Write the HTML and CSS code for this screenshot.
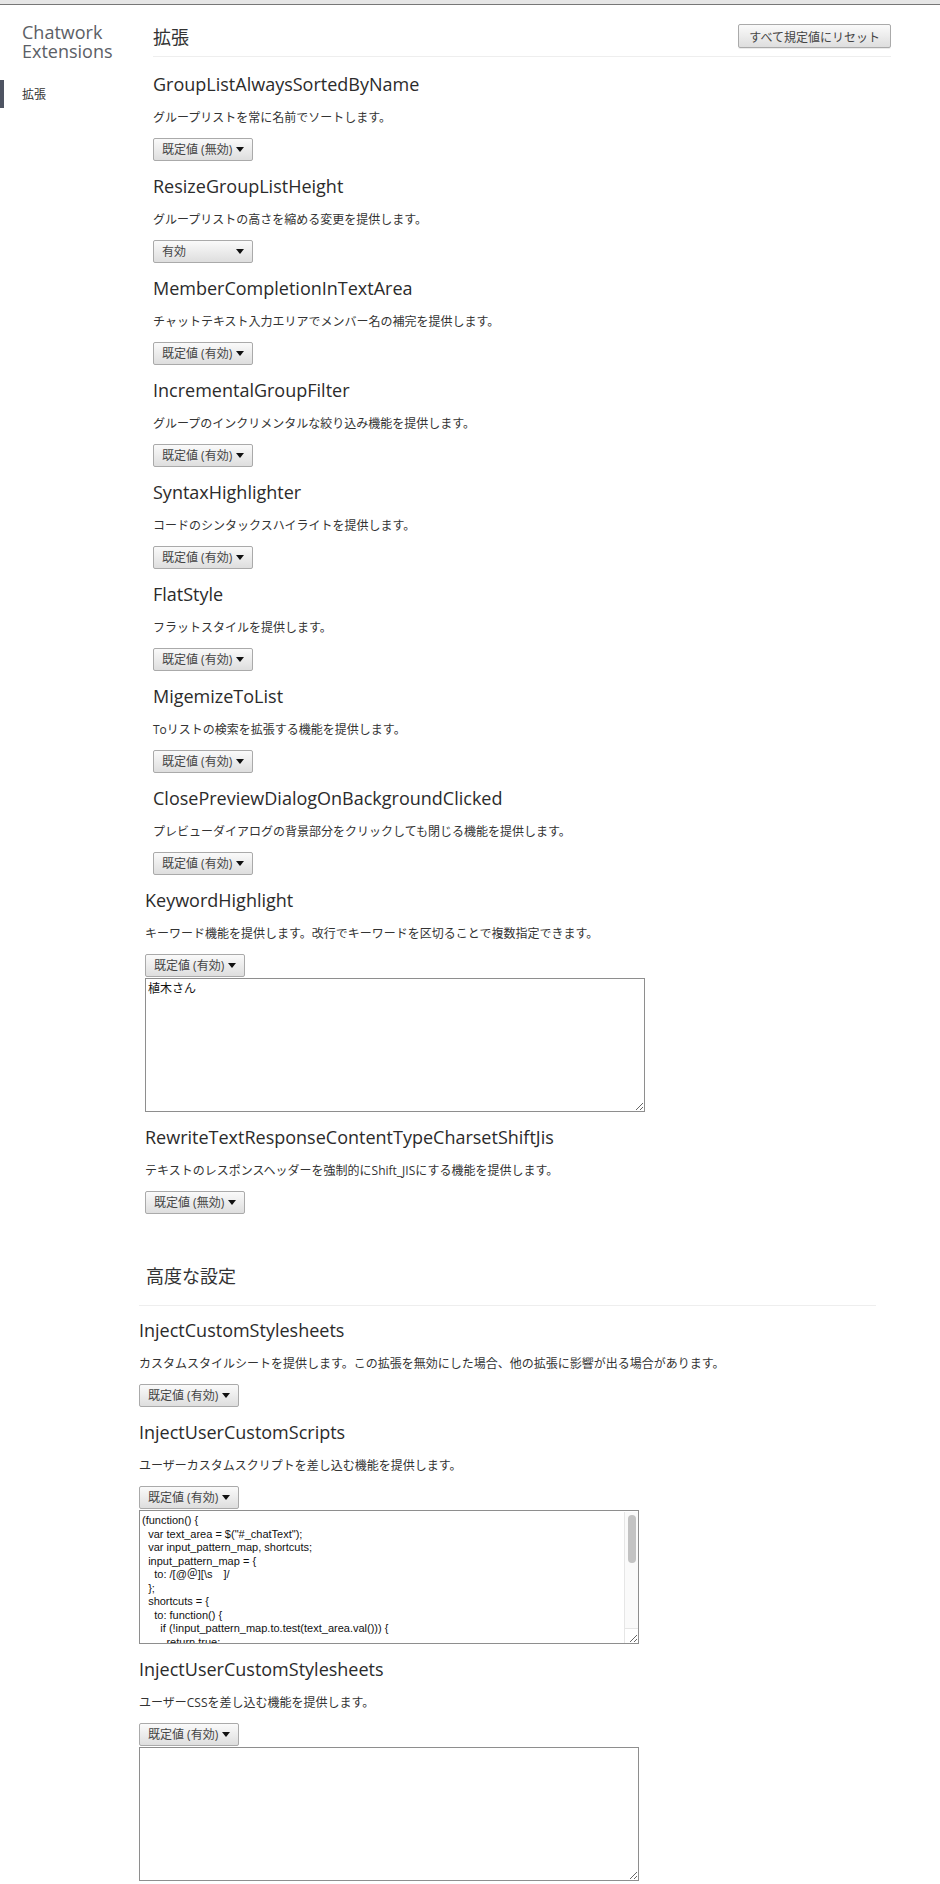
FILE: index.html
```html
<!DOCTYPE html>
<html>
    <head>
        <title>Chatwork Extensions - 設定</title>
        <meta charset="UTF-8">
        <meta name="viewport" content="width=device-width, initial-scale=1.0">
        <link rel="stylesheet" href="styles.css">
    </head>
    <body>
        <div class="topbar"></div>
        <div class="frame">
            <div class="sidebar">
                <div class="brand">
                    <div>Chatwork</div>
                    <div>Extensions</div>
                </div>
                <ul class="nav">
                    <li class="nav-item selected">拡張</li>
                </ul>
            </div>
            <div class="content">
                <div class="section">
                    <div class="section-head">
                        <h1>拡張</h1>
                        <button type="button" class="reset-btn">すべて規定値にリセット</button>
                    </div>
                    <div class="ext-list">
                        <div class="ext">
                            <h3>GroupListAlwaysSortedByName</h3>
                            <p>グループリストを常に名前でソートします。</p>
                            <div class="choice">
                                <select><option>既定値 (無効)</option><option>有効</option><option>無効</option></select>
                            </div>
                        </div>
                        <div class="ext">
                            <h3>ResizeGroupListHeight</h3>
                            <p>グループリストの高さを縮める変更を提供します。</p>
                            <div class="choice">
                                <select><option>有効</option><option>既定値 (無効)</option><option>無効</option></select>
                            </div>
                        </div>
                        <div class="ext">
                            <h3>MemberCompletionInTextArea</h3>
                            <p>チャットテキスト入力エリアでメンバー名の補完を提供します。</p>
                            <div class="choice">
                                <select><option>既定値 (有効)</option><option>有効</option><option>無効</option></select>
                            </div>
                        </div>
                        <div class="ext">
                            <h3>IncrementalGroupFilter</h3>
                            <p>グループのインクリメンタルな絞り込み機能を提供します。</p>
                            <div class="choice">
                                <select><option>既定値 (有効)</option><option>有効</option><option>無効</option></select>
                            </div>
                        </div>
                        <div class="ext">
                            <h3>SyntaxHighlighter</h3>
                            <p>コードのシンタックスハイライトを提供します。</p>
                            <div class="choice">
                                <select><option>既定値 (有効)</option><option>有効</option><option>無効</option></select>
                            </div>
                        </div>
                        <div class="ext">
                            <h3>FlatStyle</h3>
                            <p>フラットスタイルを提供します。</p>
                            <div class="choice">
                                <select><option>既定値 (有効)</option><option>有効</option><option>無効</option></select>
                            </div>
                        </div>
                        <div class="ext">
                            <h3>MigemizeToList</h3>
                            <p>Toリストの検索を拡張する機能を提供します。</p>
                            <div class="choice">
                                <select><option>既定値 (有効)</option><option>有効</option><option>無効</option></select>
                            </div>
                        </div>
                        <div class="ext">
                            <h3>ClosePreviewDialogOnBackgroundClicked</h3>
                            <p>プレビューダイアログの背景部分をクリックしても閉じる機能を提供します。</p>
                            <div class="choice">
                                <select><option>既定値 (有効)</option><option>有効</option><option>無効</option></select>
                            </div>
                        </div>
                    </div>
                    <div class="ext-list ext-list-legacy">
                        <div class="ext">
                            <h3>KeywordHighlight</h3>
                            <p>キーワード機能を提供します。改行でキーワードを区切ることで複数指定できます。</p>
                            <div class="choice">
                                <select><option>既定値 (有効)</option><option>有効</option><option>無効</option></select>
                            </div>
                            <textarea class="ext-text">植木さん</textarea>
                        </div>
                        <div class="ext">
                            <h3>RewriteTextResponseContentTypeCharsetShiftJis</h3>
                            <p>テキストのレスポンスヘッダーを強制的にShift_JISにする機能を提供します。</p>
                            <div class="choice">
                                <select><option>既定値 (無効)</option><option>有効</option><option>無効</option></select>
                            </div>
                        </div>
                    </div>
                </div>

                <div class="section section-advanced">
                    <div class="section-head">
                        <h2>高度な設定</h2>
                    </div>
                    <div class="ext-list">
                        <div class="ext">
                            <h3>InjectCustomStylesheets</h3>
                            <p>カスタムスタイルシートを提供します。この拡張を無効にした場合、他の拡張に影響が出る場合があります。</p>
                            <div class="choice">
                                <select><option>既定値 (有効)</option><option>有効</option><option>無効</option></select>
                            </div>
                        </div>
                        <div class="ext">
                            <h3>InjectUserCustomScripts</h3>
                            <p>ユーザーカスタムスクリプトを差し込む機能を提供します。</p>
                            <div class="choice">
                                <select><option>既定値 (有効)</option><option>有効</option><option>無効</option></select>
                            </div>
                            <div class="code-box">
                                <textarea class="ext-text code">(function() {
  var text_area = $("#_chatText");
  var input_pattern_map, shortcuts;
  input_pattern_map = {
    to: /[@＠][\s　]/
  };
  shortcuts = {
    to: function() {
      if (!input_pattern_map.to.test(text_area.val())) {
        return true;
      }
      return false;
    }
  };
})();</textarea>
                                <div class="scroll-track"><div class="scroll-thumb"></div></div>
                                <div class="scroll-corner"></div>
                            </div>
                        </div>
                        <div class="ext">
                            <h3>InjectUserCustomStylesheets</h3>
                            <p>ユーザーCSSを差し込む機能を提供します。</p>
                            <div class="choice">
                                <select><option>既定値 (有効)</option><option>有効</option><option>無効</option></select>
                            </div>
                            <textarea class="ext-text"></textarea>
                        </div>
                    </div>
                </div>
            </div>
        </div>
    </body>
</html>
```

FILE: styles.css
```css
body{
    margin: 0;
    background-color: white;
    color: #333;
    font-family: "Open Sans", "Noto Sans CJK JP", sans-serif;
}
.topbar{
    height: 4px;
    background-color: #e6e6e6;
    border-bottom: 1px solid #777;
}
.frame{
    display: flex;
    align-items: flex-start;
}
.sidebar{
    width: 139px;
    flex-shrink: 0;
    padding-top: 18px;
}
.brand{
    padding-left: 22px;
    font-size: 18px;
    line-height: 19px;
    color: #5c6066;
}
.nav{
    list-style: none;
    margin: 19px 0 0 0;
    padding: 0;
}
.nav-item{
    padding-left: 18px;
    border-left: 4px solid transparent;
    font-family: "Noto Sans CJK JP", sans-serif;
    font-size: 12px;
    line-height: 28px;
    color: #333;
}
.nav-item.selected{
    border-left-color: #4e5462;
}
.content{
    flex: 1;
}
.section-head{
    display: flex;
    align-items: center;
    justify-content: space-between;
    width: 738px;
    margin-left: 14px;
    padding: 19px 0 8px 0;
    border-bottom: 1px solid #eee;
}
h1, h2{
    margin: 0;
    font-family: "Noto Sans CJK JP", sans-serif;
    font-weight: normal;
    font-size: 18px;
    line-height: 24px;
    color: #333;
}
.reset-btn{
    height: 24px;
    padding: 0 10px;
    border: 1px solid #aaa;
    border-radius: 2px;
    background: linear-gradient(#fafafa, #dedede);
    font-family: "Noto Sans CJK JP", sans-serif;
    font-size: 12px;
    color: #444;
    box-shadow: 0 1px 0 rgba(0,0,0,0.08);
}
.ext-list{
    padding-left: 14px;
    padding-top: 16px;
}
.ext-list-legacy{
    padding-left: 6px;
    padding-top: 0;
}
.ext{
    margin-bottom: 14px;
}
.ext h3{
    margin: 0;
    font-weight: normal;
    font-size: 18px;
    line-height: 22px;
    color: #2b2b2b;
}
.ext p{
    margin: 15px 0 12px 0;
    font-size: 12px;
    line-height: 16px;
    color: #333;
}
.choice{
    position: relative;
    width: 100px;
}
.choice select{
    display: block;
    -webkit-appearance: none;
    appearance: none;
    width: 100px;
    height: 23px;
    padding: 0 0 0 8px;
    border: 1px solid #aaa;
    border-radius: 2px;
    background: linear-gradient(#fafafa, #dedede);
    font-family: "Open Sans", "Noto Sans CJK JP", sans-serif;
    font-size: 12px;
    color: #444;
    outline: none;
}
.choice::after{
    content: "";
    position: absolute;
    right: 9px;
    top: 9px;
    border-style: solid;
    border-width: 5px 4px 0 4px;
    border-color: #111 transparent transparent transparent;
    pointer-events: none;
}
.ext-text{
    display: block;
    box-sizing: border-box;
    width: 500px;
    height: 134px;
    margin-top: 1px;
    padding: 3px 2px;
    border: 1px solid #8e8e8e;
    font-family: "Liberation Sans", "Noto Sans CJK JP", sans-serif;
    font-size: 12px;
    line-height: 14px;
    color: #111;
    resize: both;
}
.code-box{
    position: relative;
    width: 500px;
}
.ext-text.code{
    padding-right: 18px;
    font-size: 11px;
    line-height: 13.5px;
    overflow: hidden;
}
.scroll-track{
    position: absolute;
    top: 2px;
    right: 1px;
    width: 14px;
    height: 117px;
    box-sizing: border-box;
    background-color: #fafafa;
    border-left: 1px solid #e6e6e6;
    border-bottom: 1px solid #e6e6e6;
    pointer-events: none;
}
.scroll-thumb{
    margin: 3px 2px 0 3px;
    height: 48px;
    border-radius: 5px;
    background-color: #c3c3c3;
}
.scroll-corner{
    position: absolute;
    right: 1px;
    bottom: 1px;
    width: 14px;
    height: 15px;
    box-sizing: border-box;
    border-left: 1px solid #e6e6e6;
    pointer-events: none;
}
.section-advanced{
    padding-top: 21px;
}
.section-advanced .section-head{
    width: 737px;
    margin-left: 0;
    padding: 14px 0 18px 7px;
    box-sizing: border-box;
}
.section-advanced .ext-list{
    padding-left: 0;
    padding-top: 13px;
}
```
